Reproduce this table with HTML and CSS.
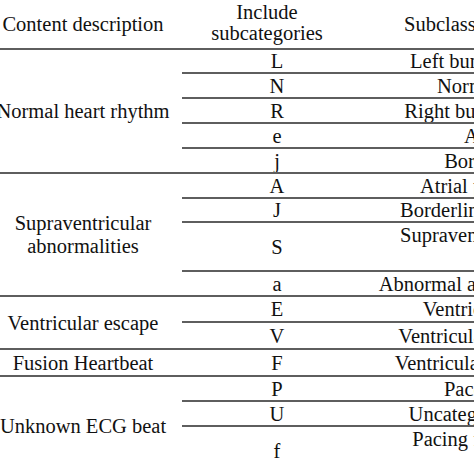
FILE: index.html
```html
<!DOCTYPE html>
<html lang="en">
<head>
<meta charset="utf-8">
<title>ECG beat classes</title>
<link rel="stylesheet" href="styles.css">
</head>
<body>
<div class="table">
  <div class="c h g">Content description</div>
  <div class="c h inc"><div class="two">Include<br>subcategories</div></div>
  <div class="c h">Subclass description</div>

  <div class="c g span5">Normal heart rhythm</div>
  <div class="c">L</div><div class="c">Left bundle branch</div>
  <div class="c">N</div><div class="c">Normal beat</div>
  <div class="c">R</div><div class="c">Right bundle branch</div>
  <div class="c">e</div><div class="c">Atrial</div>
  <div class="c">j</div><div class="c">Borderline</div>

  <div class="c g span4"><div class="two sup">Supraventricular<br>abnormalities</div></div>
  <div class="c">A</div><div class="c">Atrial premature</div>
  <div class="c">J</div><div class="c">Borderline premature</div>
  <div class="c">S</div><div class="c top">Supraventricular beat</div>
  <div class="c">a</div><div class="c">Abnormal atrial premature</div>

  <div class="c g span2">Ventricular escape</div>
  <div class="c">E</div><div class="c">Ventricular beat</div>
  <div class="c">V</div><div class="c">Ventricular premature</div>

  <div class="c g">Fusion Heartbeat</div>
  <div class="c">F</div><div class="c">Ventricular fusion beat</div>

  <div class="c g span3">Unknown ECG beat</div>
  <div class="c">P</div><div class="c">Paced beat</div>
  <div class="c">U</div><div class="c">Uncategorized beat</div>
  <div class="c">f</div><div class="c top">Pacing fusion beat</div>
</div>
</body>
</html>
```

FILE: styles.css
```css
html, body {
  margin: 0;
  padding: 0;
  overflow: hidden;
  background: #ffffff;
}

.table {
  display: grid;
  width: 604px;
  grid-template-columns: 182px 190px 232px;
  grid-template-rows: 48px 24px 25px 25px 25px 25px 25px 24px 49px 25px 26px 27px 27px 25px 25px 50px;
  font-family: "Liberation Serif", "Times New Roman", serif;
  font-size: 20.5px;
  line-height: 22px;
  color: #111111;
}

.c {
  display: flex;
  align-items: center;
  justify-content: center;
  white-space: nowrap;
  box-sizing: border-box;
  border-top: 2px solid #5e5e5e;
}

.h {
  border-top: none;
}

.g {
  padding-right: 16px;
}

.inc {
  padding-right: 20px;
  padding-bottom: 2px;
}

.two {
  text-align: center;
  line-height: 21px;
}

.sup {
  line-height: 23px;
}

.top {
  align-items: flex-start;
  padding-top: 1px;
}

.span2 { grid-row: span 2; }
.span3 { grid-row: span 3; }
.span4 { grid-row: span 4; }
.span5 { grid-row: span 5; }
```
